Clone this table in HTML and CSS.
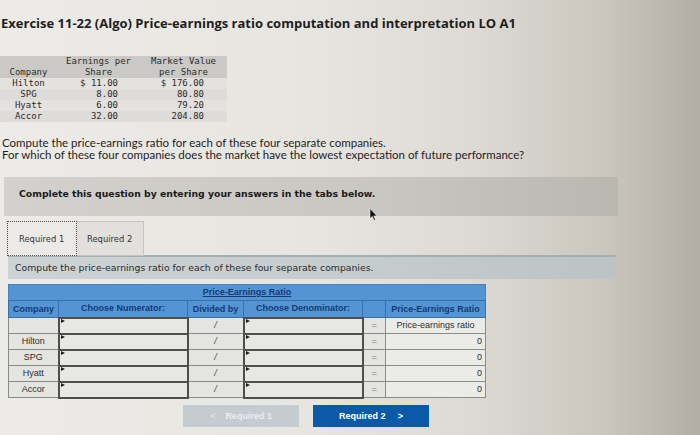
FILE: index.html
```html
<!DOCTYPE html>
<html>
<head>
<meta charset="utf-8">
<link rel="stylesheet" href="styles.css">
</head>
<body>
<h1 class="title">Exercise 11-22 (Algo) Price-earnings ratio computation and interpretation LO A1</h1>

<table class="data">
  <colgroup><col class="c0"><col class="c1"><col class="c2"></colgroup>
  <thead>
    <tr><th><br>Company</th><th>Earnings per<br>Share</th><th>Market Value<br>per Share</th></tr>
  </thead>
  <tbody>
    <tr><td>Hilton</td><td class="n1">$ 11.00</td><td class="n2">$ 176.00</td></tr>
    <tr class="alt"><td>SPG</td><td class="n1">8.00</td><td class="n2">80.80</td></tr>
    <tr><td>Hyatt</td><td class="n1">6.00</td><td class="n2">79.20</td></tr>
    <tr class="alt"><td>Accor</td><td class="n1">32.00</td><td class="n2">204.80</td></tr>
  </tbody>
</table>

<p class="prompt">Compute the price-earnings ratio for each of these four separate companies.<br>For which of these four companies does the market have the lowest expectation of future performance?</p>

<div class="banner">Complete this question by entering your answers in the tabs below.</div>

<div class="tabs">
  <div class="tab active">Required 1</div>
  <div class="tab">Required 2</div>
</div>
<div class="instr">Compute the price-earnings ratio for each of these four separate companies.</div>

<table class="pe">
  <colgroup><col class="w-co"><col class="w-num"><col class="w-div"><col class="w-den"><col class="w-eq"><col class="w-res"></colgroup>
  <thead>
    <tr class="cap"><th colspan="6"><span>Price-Earnings Ratio</span></th></tr>
    <tr class="hd"><th>Company</th><th>Choose Numerator:</th><th>Divided by</th><th>Choose Denominator:</th><th></th><th>Price-Earnings Ratio</th></tr>
  </thead>
  <tbody>
    <tr><td></td><td class="inp"></td><td class="sl">/</td><td class="inp"></td><td class="eq">=</td><td class="res lbl">Price-earnings ratio</td></tr>
    <tr><td>Hilton</td><td class="inp"></td><td class="sl">/</td><td class="inp"></td><td class="eq">=</td><td class="res">0</td></tr>
    <tr><td>SPG</td><td class="inp"></td><td class="sl">/</td><td class="inp"></td><td class="eq">=</td><td class="res">0</td></tr>
    <tr><td>Hyatt</td><td class="inp"></td><td class="sl">/</td><td class="inp"></td><td class="eq">=</td><td class="res">0</td></tr>
    <tr><td>Accor</td><td class="inp"></td><td class="sl">/</td><td class="inp"></td><td class="eq">=</td><td class="res">0</td></tr>
  </tbody>
</table>

<div class="nav">
  <button class="btn prev"><span class="chev">&lt;</span>Required 1</button>
  <button class="btn next">Required 2<span class="chev r">&gt;</span></button>
</div>

<svg class="cursor" width="9" height="13" viewBox="0 0 9 13"><path d="M1 0.5 L1 10.5 L3.3 8.4 L5 12.3 L6.4 11.7 L4.8 7.9 L8 7.9 Z" fill="#111" stroke="#eee" stroke-width="0.6"/></svg>
</body>
</html>
```

FILE: styles.css
```css
html, body { margin: 0; padding: 0; }
body {
  width: 700px;
  height: 435px;
  overflow: hidden;
  position: relative;
  background: linear-gradient(to right, #ecebe7 0%, #e7e5e0 45%, #dddad4 68%, #cbc7bf 86%, #b3aea5 100%);
  font-family: Lato, "Liberation Sans", sans-serif;
  color: #1d1d1d;
}
.title {
  margin: 0;
  padding: 15px 0 0 1px;
  font: 700 13px/16px "Open Sans", Lato, sans-serif;
  color: #1e1e1e;
}

/* data table */
.data {
  margin-top: 25px;
  border-collapse: collapse;
  font: 9px/11px "DejaVu Sans Mono", monospace;
  color: #2b2b2b;
}
.data .c0 { width: 57px; }
.data .c1 { width: 83px; }
.data .c2 { width: 87px; }
.data th, .data td { padding: 0; text-align: center; }
.data th { font-weight: normal; background: #cac9c6; }
.data tr.alt td { background: #dddcd8; }
.data td { background: #e3e2de; }
.data td.n1 { text-align: right; padding-right: 22px; }
.data td.n2 { text-align: right; padding-right: 23px; }

.prompt {
  margin: 15px 0 0 2px;
  font: 11.5px/12px Lato, "Liberation Sans", sans-serif;
  color: #1e1e1e;
}

.banner {
  margin: 16px 0 0 4px;
  width: 614px;
  height: 39px;
  box-sizing: border-box;
  padding: 11px 15px 0;
  background: linear-gradient(to right, #d2d1cd, #c9c7c1 60%, #bab7b0);
  font: 700 9.3px/12px "DejaVu Sans", sans-serif;
  color: #1a1a1a;
}

.tabs {
  display: flex;
  margin: 5px 0 0 7px;
}
.tab {
  height: 35px;
  box-sizing: border-box;
  display: flex;
  align-items: center;
  padding: 0 0 0 11px;
  font: 8.4px "DejaVu Sans", sans-serif;
  color: #333;
}
.tab.active {
  width: 70px;
  border: 1px dotted #4a4a4a;
  background: #ebeae6;
}
.tab:not(.active) {
  width: 67px;
  padding-left: 10px;
  border: 1px solid #c6c4bf;
  border-left: none;
  background: #e1e0dc;
}

.instr {
  margin: -1px 0 0 8px;
  width: 608px;
  height: 24px;
  box-sizing: border-box;
  border-top: 2px solid #a5aeb1;
  background: linear-gradient(to right, #cdd3d5, #c5ccce 60%, #bcc3c5);
  padding-left: 7px;
  font: 9.3px/21px "DejaVu Sans", sans-serif;
  color: #2a2a2a;
}

/* price-earnings table */
.pe {
  margin: 5px 0 0 8px;
  width: 477px;
  table-layout: fixed;
  border-collapse: collapse;
  font: 9px/11px "Liberation Sans", Arial, sans-serif;
  color: #2e2e2e;
}
.pe .w-co { width: 50px; }
.pe .w-num { width: 129px; }
.pe .w-div { width: 56px; }
.pe .w-den { width: 119px; }
.pe .w-eq { width: 23px; }
.pe .w-res { width: 100px; }
.pe th {
  background: #5395d4;
  color: #163a70;
  font-weight: 700;
  padding: 0;
}
.pe tr.cap { height: 16px; }
.pe tr.cap th {
  border: 1px solid #4a82bf;
  border-bottom: 1px solid #3c6fa8;
}
.pe tr.cap span { text-decoration: underline; }
.pe tr.hd { height: 17px; }
.pe tr.hd th { border: 1px solid #3c6fa8; }
.pe tbody tr { height: 16px; }
.pe td {
  padding: 0;
  border: 1px solid #8a8a88;
  background: #e4e4e1;
  text-align: center;
}
.pe td.inp {
  position: relative;
  border: 2px solid #4e4e4e;
  background: #e7e7e4;
}
.pe td.inp::before {
  content: "";
  position: absolute;
  left: 1px;
  top: 0;
  border-left: 4px solid #1e1e1e;
  border-top: 2px solid transparent;
  border-bottom: 2px solid transparent;
}
.pe td.sl { color: #444; font-style: italic; }
.pe td.eq { color: #777; }
.pe td.res { text-align: right; padding-right: 3px; background: #ebebe8; }
.pe td.res.lbl { text-align: center; padding-right: 0; }

.nav {
  width: 612px;
  display: flex;
  justify-content: center;
  gap: 14px;
  margin-top: 6px;
}
.btn {
  width: 116px;
  height: 22px;
  border: none;
  padding: 0;
  font: 700 9px "Liberation Sans", Arial, sans-serif;
}
.btn.prev { background: #c4ccd2; color: #e8edf0; }
.btn.next { background: #0b5aa8; color: #ffffff; }
.chev { font-weight: 400; margin-right: 10px; }
.chev.r { margin: 0 0 0 12px; font-weight: 700; }

.cursor {
  position: absolute;
  left: 369px;
  top: 208px;
}
```
